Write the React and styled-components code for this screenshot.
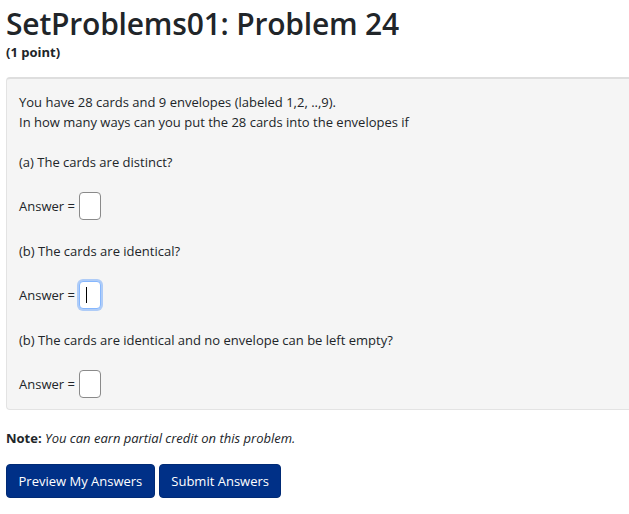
import styled, { createGlobalStyle } from 'styled-components';

const Global = createGlobalStyle`
  body {
    margin: 0;
    background: #fff;
    font-family: 'Open Sans', 'Noto Sans', sans-serif;
    color: #212529;
  }
`;

const Page = styled.div`
  padding: 4px 0 0 6px;
`;

const Title = styled.h1`
  margin: 0;
  font-size: 30px;
  font-weight: 600;
  line-height: 40px;
  letter-spacing: -0.2px;
`;

const Points = styled.div`
  font-size: 13px;
  font-weight: 700;
  line-height: 16px;
`;

const Panel = styled.div`
  margin-top: 17px;
  background: #f5f5f5;
  border: 1px solid #e3e3e3;
  border-top: 2px solid #dedede;
  border-right: none;
  border-radius: 4px 0 0 4px;
  padding: 13px 12px 11px 12px;
  font-size: 13px;
  line-height: 20px;
`;

const Para = styled.p`
  margin: 0 0 20px 0;
`;

const AnswerRow = styled.div`
  display: flex;
  align-items: center;
  gap: 4px;
  height: 28px;
  margin: 0 0 21px 0;
  &:last-child { margin-bottom: 0; }
`;

const Box = styled.input`
  width: 22px;
  height: 28px;
  box-sizing: border-box;
  border: 1px solid #8a8a8a;
  border-radius: 4px;
  background: #fff;
  padding: 0 4px;
  font: inherit;
  outline: none;
`;

const Caret = styled.span`
  display: inline-block;
  width: 1px;
  height: 16px;
  background: #000;
`;

const FocusBox = styled.div`
  width: 22px;
  height: 28px;
  box-sizing: border-box;
  border: 1px solid #86b7fe;
  border-radius: 4px;
  background: #fff;
  box-shadow: 0 0 0 2px rgba(13, 110, 253, 0.3);
  display: flex;
  align-items: center;
  padding-left: 6px;
`;

const Note = styled.div`
  margin-top: 19px;
  font-size: 13px;
  line-height: 18px;
  b { font-weight: 700; }
  i { font-style: italic; }
`;

const Buttons = styled.div`
  display: flex;
  gap: 4px;
  margin-top: 17px;
`;

const Button = styled.button`
  background: #003087;
  color: #fff;
  border: 1px solid #002a75;
  border-radius: 4px;
  font-family: inherit;
  font-size: 13px;
  height: 34px;
  padding: 0 11.5px;
  cursor: pointer;
`;

export default function App() {
  return (
    <>
      <Global />
      <Page>
        <Title>SetProblems01: Problem 24</Title>
        <Points>(1 point)</Points>
        <Panel>
          <Para>
            You have 28 cards and 9 envelopes (labeled 1,2, ..,9).
            <br />
            In how many ways can you put the 28 cards into the envelopes if
          </Para>
          <Para>(a) The cards are distinct?</Para>
          <AnswerRow>
            Answer = <Box />
          </AnswerRow>
          <Para>(b) The cards are identical?</Para>
          <AnswerRow>
            Answer = <FocusBox><Caret /></FocusBox>
          </AnswerRow>
          <Para>(b) The cards are identical and no envelope can be left empty?</Para>
          <AnswerRow>
            Answer = <Box />
          </AnswerRow>
        </Panel>
        <Note>
          <b>Note:</b> <i>You can earn partial credit on this problem.</i>
        </Note>
        <Buttons>
          <Button>Preview My Answers</Button>
          <Button>Submit Answers</Button>
        </Buttons>
      </Page>
    </>
  );
}
